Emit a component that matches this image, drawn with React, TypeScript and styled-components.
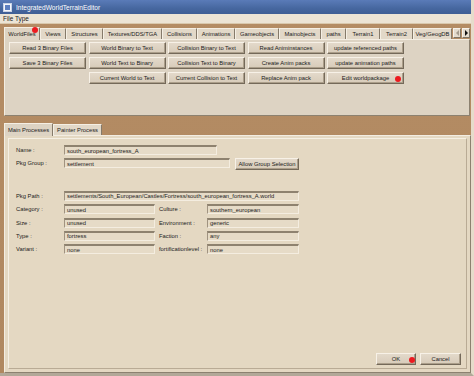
import * as React from 'react';
import styled, { createGlobalStyle } from 'styled-components';

const GlobalStyle = createGlobalStyle`
  html, body {
    margin: 0;
    padding: 0;
    background: #b48c64;
  }
  * {
    box-sizing: border-box;
  }
`;

const Window = styled.div`
  width: 474px;
  height: 376px;
  display: flex;
  flex-direction: column;
  font-family: 'Liberation Sans', Arial, sans-serif;
  font-size: 6px;
  color: #1a1a1a;
  overflow: hidden;
  background: linear-gradient(#cfae88 0px, #b48c64 10px, #b08860 100%);
  border-right: 3px solid #e6dccb;
  border-bottom: 3px solid #b2a898;
`;

const TitleBar = styled.div`
  height: 14px;
  display: flex;
  align-items: center;
  gap: 4px;
  padding-left: 3px;
  background: linear-gradient(#5a7bb8, #46679f 60%, #3f5e95);
  color: #ffffff;
  font-size: 6.6px;
`;

const MenuBar = styled.div`
  height: 10px;
  display: flex;
  align-items: center;
  padding-left: 3px;
  background: #ece4d5;
  border-bottom: 1px solid #d9c8ad;
  font-size: 6.4px;
`;

const Body = styled.div`
  flex: 1;
  display: flex;
  flex-direction: column;
  padding: 3px 1px 0 4px;
`;

const TabWidget = styled.div<{ $grow?: boolean }>`
  display: flex;
  flex-direction: column;
  flex: ${(p) => (p.$grow ? 1 : 'none')};
  margin-top: ${(p) => (p.$grow ? '7px' : '0')};
`;

const TabBar = styled.div`
  height: 12px;
  display: flex;
  align-items: flex-end;
  position: relative;
  z-index: 1;
`;

const Tab = styled.div<{ $w: number; $active?: boolean }>`
  position: relative;
  width: ${(p) => p.$w}px;
  height: ${(p) => (p.$active ? '13px' : '11px')};
  margin-bottom: ${(p) => (p.$active ? '-1px' : '0')};
  display: flex;
  align-items: center;
  justify-content: center;
  white-space: nowrap;
  font-size: 5.8px;
  background: ${(p) => (p.$active ? '#ddd3c3' : '#e2d8c8')};
  border-top: 1px solid #f5efe4;
  border-left: 1px solid #f5efe4;
  border-right: 1px solid #857a6a;
`;

const ScrollArrows = styled.div`
  margin-left: auto;
  display: flex;
  gap: 1px;
  margin-bottom: 1px;
`;

const ArrowBox = styled.div`
  width: 8px;
  height: 10px;
  display: flex;
  align-items: center;
  justify-content: center;
  background: #e4dbcd;
  border: 1px solid;
  border-color: #f7f2ea #7f7464 #7f7464 #f7f2ea;
`;

const Panel = styled.div<{ $bg: string }>`
  width: 466px;
  background: ${(p) => p.$bg};
  border-top: 1px solid #f3ede2;
  border-left: 1px solid #f3ede2;
  border-right: 1px solid #8c8170;
  border-bottom: 1px solid #8c8170;
`;

const ToolPanel = styled(Panel)`
  height: 77px;
  padding: 2px 0 0 4px;
`;

const ButtonGrid = styled.div`
  display: grid;
  grid-template-columns: repeat(5, 77px);
  grid-auto-rows: 12px;
  column-gap: 2.5px;
  row-gap: 3px;
`;

const Button = styled.div<{ $col?: number }>`
  position: relative;
  grid-column: ${(p) => (p.$col ? `${p.$col}` : 'auto')};
  display: flex;
  align-items: center;
  justify-content: center;
  white-space: nowrap;
  font-size: 5.8px;
  background: linear-gradient(#e3d9ca, #d7cbb9);
  border: 1px solid;
  border-color: #f7f1e7 #746959 #746959 #f7f1e7;
  box-shadow: inset -1px -1px 0 #ab9e8a;
`;

const Dot = styled.span<{ $top: number; $right: number }>`
  position: absolute;
  top: ${(p) => p.$top}px;
  right: ${(p) => p.$right}px;
  width: 6px;
  height: 6px;
  border-radius: 50%;
  background: #ec1a1f;
`;

const MainPanel = styled(Panel)`
  flex: 1;
  display: flex;
  padding: 2px 3px 3px 3px;
  width: 467px;
`;

const GroupBox = styled.div`
  flex: 1;
  display: flex;
  flex-direction: column;
  padding: 6px 4px 3px 7px;
  background: #e4d8c2;
  border-top: 1px solid #f5efe3;
  border-left: 1px solid #f5efe3;
  border-right: 1px solid #b9ab95;
  border-bottom: 1px solid #b9ab95;
`;

const Form = styled.div`
  display: flex;
  flex-direction: column;
  gap: 3.4px;
`;

const Row = styled.div<{ $top?: number }>`
  display: flex;
  align-items: flex-start;
  margin-top: ${(p) => p.$top ?? 0}px;
`;

const Label = styled.div`
  width: 48px;
  height: 10px;
  display: flex;
  align-items: center;
  font-size: 5.8px;
  white-space: nowrap;
`;

const Field = styled.div<{ $w: number }>`
  width: ${(p) => p.$w}px;
  height: 10px;
  display: flex;
  align-items: center;
  padding-left: 2px;
  overflow: hidden;
  white-space: nowrap;
  font-size: 5.8px;
  background: #e6dbc7;
  border-top: 2px solid #8e826f;
  border-left: 1px solid #a09380;
  border-right: 1px solid #f4ede0;
  border-bottom: 1px solid #f4ede0;
`;

const Gap = styled.div<{ $w: number }>`
  width: ${(p) => p.$w}px;
`;

const SmallButton = styled(Button)<{ $w: number }>`
  width: ${(p) => p.$w}px;
  height: 12px;
`;

const Footer = styled.div`
  margin-top: auto;
  display: flex;
  justify-content: flex-end;
  gap: 4px;
  padding-right: 1px;
`;

const topTabs: [string, number][] = [
  ['WorldFiles', 36],
  ['Views', 26],
  ['Structures', 37],
  ['Textures/DDS/TGA', 59],
  ['Collisions', 35],
  ['Animations', 38],
  ['Gameobjects', 44],
  ['Mainobjects', 42],
  ['paths', 25],
  ['Terrain1', 34],
  ['Terrain2', 33],
  ['Veg/GeogDB', 39],
];

const buttonRows: (string | null)[][] = [
  ['Read 3 Binary Files', 'World Binary to Text', 'Collision Binary to Text', 'Read Animinstances', 'update referenced paths'],
  ['Save 3 Binary Files', 'World Text to Binary', 'Collision Text to Binary', 'Create Anim packs', 'update animation paths'],
  [null, 'Current World to Text', 'Current Collision to Text', 'Replace Anim pack', 'Edit worldpackage'],
];

function AppIcon() {
  return (
    <svg width="9" height="9" viewBox="0 0 9 9">
      <rect x="0.5" y="0.5" width="8" height="8" fill="#f4f6fb" stroke="#c9d3e6" />
      <rect x="2" y="2" width="5" height="5" fill="#5d7fc0" />
    </svg>
  );
}

function Arrow({ dir, dim }: { dir: 'left' | 'right'; dim?: boolean }) {
  const pts = dir === 'left' ? '4,0 4,6 1,3' : '1,0 1,6 4,3';
  return (
    <svg width="5" height="6" viewBox="0 0 5 6">
      <polygon points={pts} fill={dim ? '#a59b8d' : '#111'} />
    </svg>
  );
}

export default function App() {
  return (
    <>
      <GlobalStyle />
      <Window>
        <TitleBar>
          <AppIcon />
          <span>IntegratedWorldTerrainEditor</span>
        </TitleBar>
        <MenuBar>File Type</MenuBar>
        <Body>
          <TabWidget>
            <TabBar>
              {topTabs.map(([name, w], i) => (
                <Tab key={name} $w={w} $active={i === 0}>
                  {name}
                  {i === 0 && <Dot $top={-1} $right={1} />}
                </Tab>
              ))}
              <ScrollArrows>
                <ArrowBox>
                  <Arrow dir="left" dim />
                </ArrowBox>
                <ArrowBox>
                  <Arrow dir="right" />
                </ArrowBox>
              </ScrollArrows>
            </TabBar>
            <ToolPanel $bg="#ddd3c3">
              <ButtonGrid>
                {buttonRows.map((row, r) =>
                  row.map((label, c) =>
                    label ? (
                      <Button key={`${r}-${c}`} $col={c + 1}>
                        {label}
                        {label === 'Edit worldpackage' && <Dot $top={3} $right={2} />}
                      </Button>
                    ) : null
                  )
                )}
              </ButtonGrid>
            </ToolPanel>
          </TabWidget>

          <TabWidget $grow>
            <TabBar>
              <Tab $w={49} $active>
                Main Processes
              </Tab>
              <Tab $w={49}>Painter Process</Tab>
            </TabBar>
            <MainPanel $bg="#e4d8c2">
              <GroupBox>
                <Form>
                  <Row>
                    <Label>Name :</Label>
                    <Field $w={153}>south_european_fortress_A</Field>
                  </Row>
                  <Row>
                    <Label>Pkg Group :</Label>
                    <Field $w={166}>settlement</Field>
                    <Gap $w={5} />
                    <SmallButton $w={64}>Allow Group Selection</SmallButton>
                  </Row>
                  <Row $top={17}>
                    <Label>Pkg Path :</Label>
                    <Field $w={235}>settlements/South_European/Castles/Fortress/south_european_fortress_A.world</Field>
                  </Row>
                  <Row>
                    <Label>Category :</Label>
                    <Field $w={91}>unused</Field>
                    <Gap $w={4} />
                    <Label>Culture :</Label>
                    <Field $w={92}>southern_european</Field>
                  </Row>
                  <Row>
                    <Label>Size :</Label>
                    <Field $w={91}>unused</Field>
                    <Gap $w={4} />
                    <Label>Environment :</Label>
                    <Field $w={92}>generic</Field>
                  </Row>
                  <Row>
                    <Label>Type :</Label>
                    <Field $w={91}>fortress</Field>
                    <Gap $w={4} />
                    <Label>Faction :</Label>
                    <Field $w={92}>any</Field>
                  </Row>
                  <Row>
                    <Label>Variant :</Label>
                    <Field $w={91}>none</Field>
                    <Gap $w={4} />
                    <Label>fortificationlevel :</Label>
                    <Field $w={92}>none</Field>
                  </Row>
                </Form>
                <Footer>
                  <SmallButton $w={40}>
                    OK
                    <Dot $top={3} $right={0} />
                  </SmallButton>
                  <SmallButton $w={41}>Cancel</SmallButton>
                </Footer>
              </GroupBox>
            </MainPanel>
          </TabWidget>
        </Body>
      </Window>
    </>
  );
}
